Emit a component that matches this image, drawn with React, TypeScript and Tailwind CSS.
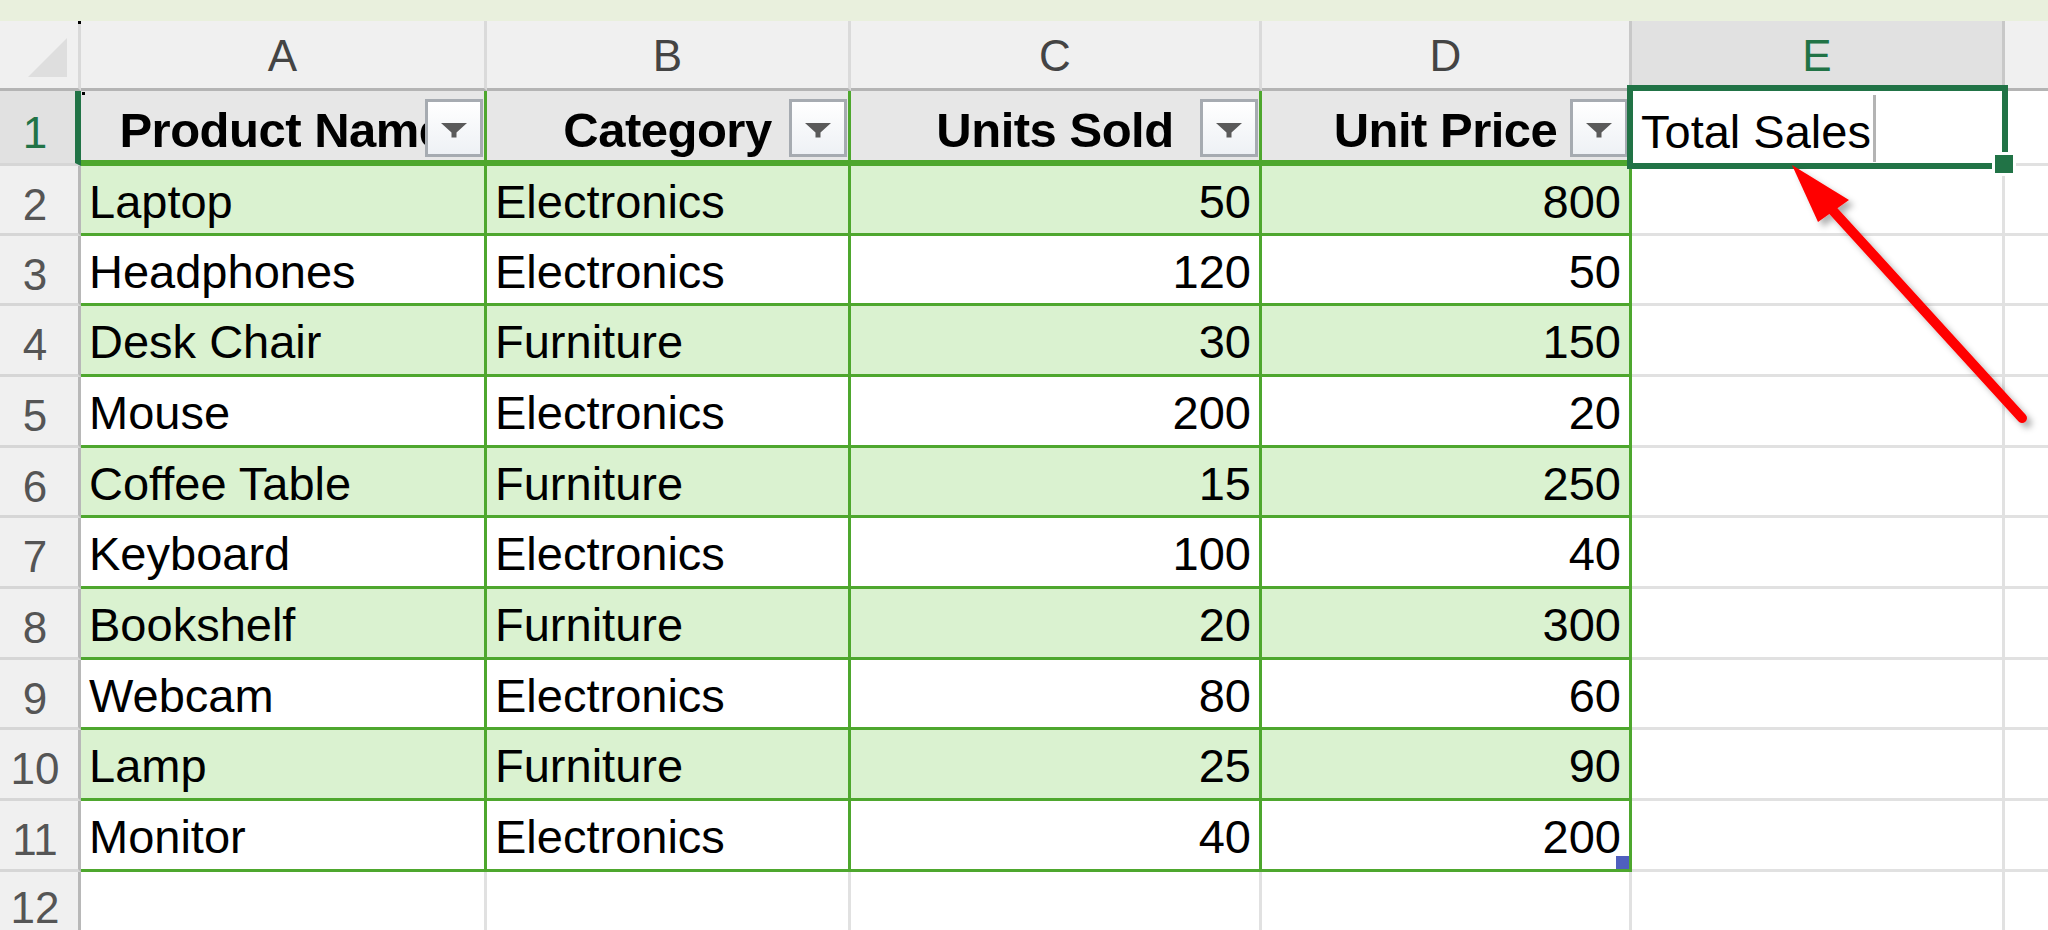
import React from 'react';

const COLS = ['A', 'B', 'C', 'D', 'E', ''];
const colW = ['w-[406px]', 'w-[364px]', 'w-[411px]', 'w-[370px]', 'w-[373px]', 'w-[43px]'];
const colHeadCls = [
  'border-r-[3px] border-r-[#dadada] bg-[#f0f0f0] text-[#444444]',
  'border-r-[3px] border-r-[#dadada] bg-[#f0f0f0] text-[#444444]',
  'border-r-[3px] border-r-[#dadada] bg-[#f0f0f0] text-[#444444]',
  'border-r-[3px] border-r-[#c8c8c8] bg-[#f0f0f0] text-[#444444]',
  'border-r-[3px] border-r-[#c8c8c8] bg-[#e1e1e1] text-[#217346]',
  'bg-[#f0f0f0] text-[#444444]',
];
const rowH = [
  'h-[70px]', 'h-[70px]', 'h-[71px]', 'h-[71px]', 'h-[70px]',
  'h-[71px]', 'h-[71px]', 'h-[70px]', 'h-[71px]', 'h-[71px]',
];

const headers = ['Product Name', 'Category', 'Units Sold', 'Unit Price'];

const data: string[][] = [
  ['Laptop', 'Electronics', '50', '800'],
  ['Headphones', 'Electronics', '120', '50'],
  ['Desk Chair', 'Furniture', '30', '150'],
  ['Mouse', 'Electronics', '200', '20'],
  ['Coffee Table', 'Furniture', '15', '250'],
  ['Keyboard', 'Electronics', '100', '40'],
  ['Bookshelf', 'Furniture', '20', '300'],
  ['Webcam', 'Electronics', '80', '60'],
  ['Lamp', 'Furniture', '25', '90'],
  ['Monitor', 'Electronics', '40', '200'],
];

function FilterBtn() {
  return (
    <div className="absolute right-[1px] top-[8px] z-10 flex h-[58px] w-[58px] items-center justify-center border-[3px] border-[#a6abb1] bg-linear-to-b from-white to-[#eef1f5]">
      <svg width="26" height="15" viewBox="0 0 26 15" className="mt-[4px]">
        <path d="M0 0H26L15.5 9.5V14.5H10.5V9.5Z" fill="#5a5a5a" />
      </svg>
    </div>
  );
}

function RowHead({ n }: { n: number }) {
  return (
    <div className="flex w-[81px] shrink-0 justify-center border-r-[3px] border-b-[3px] border-r-[#b8b8b8] border-b-[#d6d6d6] bg-[#f0f0f0] pr-[8px] pt-[17px] text-[44px] leading-[44px] text-[#555555]">
      {n}
    </div>
  );
}

export default function App() {
  return (
    <div className="relative h-[930px] w-[2048px] overflow-hidden bg-white font-['Liberation_Sans',Arial,sans-serif] text-black">
      {/* top strip */}
      <div className="h-[21px] bg-[#e9f0dd]" />

      {/* column headers */}
      <div className="flex h-[70px]">
        <div className="relative w-[81px] shrink-0 border-r-[3px] border-b-[3px] border-r-[#d9d9d9] border-b-[#b4b4b4] bg-[#f0f0f0]">
          <svg className="absolute left-0 top-0" width="78" height="67" viewBox="0 0 78 67">
            <polygon points="28,56 67,56 67,17" fill="#dedede" />
          </svg>
        </div>
        {COLS.map((c, i) => (
          <div
            key={i}
            className={`flex shrink-0 justify-center border-b-[3px] border-b-[#b4b4b4] pt-[13px] text-[44px] leading-[44px] ${colW[i]} ${colHeadCls[i]}`}
          >
            {c}
          </div>
        ))}
      </div>

      {/* row 1: table headers */}
      <div className="flex h-[75px]">
        <div className="flex w-[81px] shrink-0 justify-center border-r-[6px] border-b-[3px] border-r-[#217346] border-b-[#d6d6d6] bg-[#e1e1e1] pr-[5px] pt-[20px] text-[44px] leading-[44px] text-[#217346]">
          1
        </div>
        {headers.map((h, i) => (
          <div
            key={h}
            className={`relative shrink-0 overflow-hidden border-r-[3px] border-b-[6px] border-[#4ea72e] bg-[#e7e7e7] ${colW[i]}`}
          >
            <div className="flex justify-center whitespace-nowrap pt-[15px] text-[49px] font-bold leading-[49px] tracking-[-0.5px]">
              {h}
            </div>
            <FilterBtn />
          </div>
        ))}
        <div className="relative w-[373px] shrink-0 border-r-[3px] border-b-[3px] border-[#e1e1e1] bg-white">
          <div className="flex items-start">
            <span className="whitespace-nowrap pl-[9px] pt-[17px] text-[47px] leading-[47px]">Total Sales</span>
            <span className="ml-[2px] mt-[4px] h-[67px] w-[3px] bg-[#b4b4b4]" />
          </div>
        </div>
        <div className="w-[43px] shrink-0 border-b-[3px] border-[#e1e1e1] bg-white" />
      </div>

      {/* data rows */}
      {data.map((row, r) => {
        const fill = r % 2 === 0 ? 'bg-[#daf2d0]' : 'bg-white';
        return (
          <div key={r} className={`flex ${rowH[r]}`}>
            <RowHead n={r + 2} />
            {row.map((v, i) => (
              <div
                key={i}
                className={`relative shrink-0 whitespace-nowrap border-r-[3px] border-b-[3px] border-[#4ea72e] pt-[12px] text-[47px] leading-[47px] ${fill} ${colW[i]} ${i >= 2 ? 'pr-[8px] text-right' : 'pl-[8px]'}`}
              >
                {v}
                {r === 9 && i === 3 && (
                  <div className="absolute bottom-0 right-0 h-[13px] w-[13px] bg-[#4f5fbf]" />
                )}
              </div>
            ))}
            <div className="w-[373px] shrink-0 border-r-[3px] border-b-[3px] border-[#e1e1e1]" />
            <div className="w-[43px] shrink-0 border-b-[3px] border-[#e1e1e1]" />
          </div>
        );
      })}

      {/* row 12 */}
      <div className="flex h-[58px]">
        <div className="flex w-[81px] shrink-0 justify-center border-r-[3px] border-r-[#b8b8b8] bg-[#f0f0f0] pr-[8px] pt-[14px] text-[44px] leading-[44px] text-[#555555]">
          12
        </div>
        {colW.slice(0, 5).map((w, i) => (
          <div key={i} className={`shrink-0 border-r-[3px] border-[#e1e1e1] ${w}`} />
        ))}
        <div className="w-[43px] shrink-0" />
      </div>

      {/* selection of E1 */}
      <div className="pointer-events-none absolute left-[1627px] top-[85px] z-20 h-[84px] w-[381px] border-[6px] border-[#217346]" />
      <div className="pointer-events-none absolute left-[1992px] top-[152px] z-20 h-[24px] w-[24px] bg-white p-[3px]">
        <div className="h-full w-full bg-[#217346]" />
      </div>

      {/* stray dots */}
      <div className="absolute left-[78px] top-[21px] h-[3px] w-[3px] bg-black" />
      <div className="absolute left-[82px] top-[92px] z-20 h-[3px] w-[3px] bg-black" />

      {/* red arrow */}
      <svg
        className="pointer-events-none absolute left-0 top-0 z-30"
        width="2048"
        height="930"
        viewBox="0 0 2048 930"
      >
        <defs>
          <filter id="shadow" x="-20%" y="-20%" width="140%" height="140%">
            <feDropShadow dx="5" dy="5" stdDeviation="3" floodColor="#000000" floodOpacity="0.3" />
          </filter>
        </defs>
        <g filter="url(#shadow)">
          <line x1="1826" y1="203" x2="2022" y2="418" stroke="#ff0000" strokeWidth="10" strokeLinecap="round" />
          <polygon points="1792,165 1849,200 1818,222" fill="#ff0000" />
        </g>
      </svg>
    </div>
  );
}
